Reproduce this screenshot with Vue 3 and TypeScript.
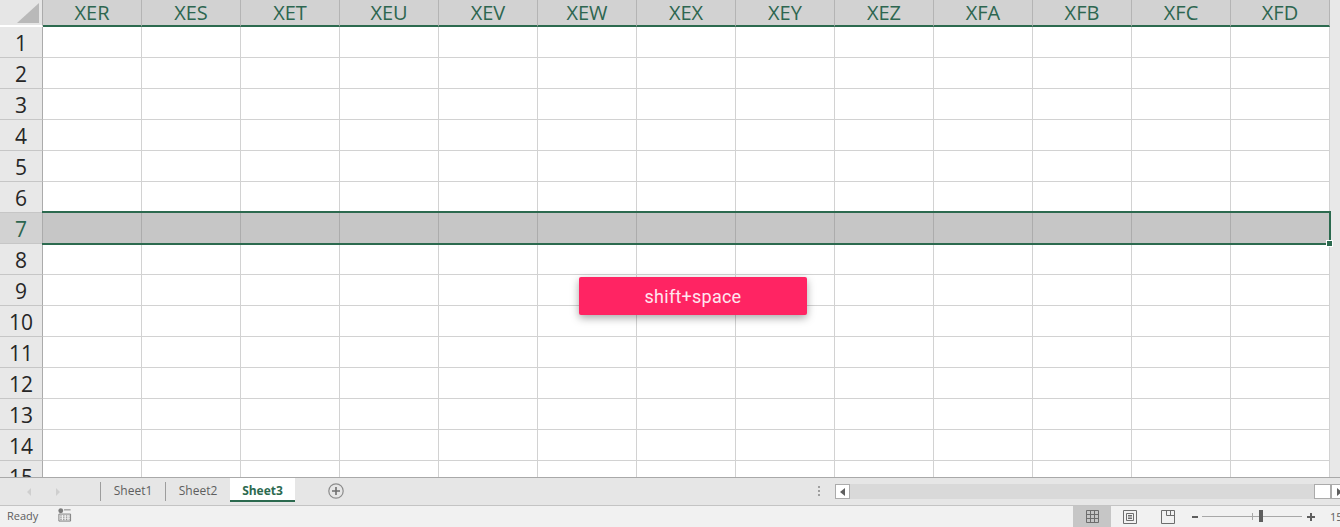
<script setup lang="ts">
const columns: string[] = ['XER','XES','XET','XEU','XEV','XEW','XEX','XEY','XEZ','XFA','XFB','XFC','XFD']
const rows: number[] = Array.from({ length: 15 }, (_, i) => i + 1)
const tabs: string[] = ['Sheet1', 'Sheet2']
</script>

<template>
  <div class="app">
    <div class="sheet">
      <div class="grid">
        <div class="corner"><svg width="42" height="25" viewBox="0 0 42 25"><path d="M39 3V23H17Z" fill="#b9b9b9"/></svg></div>
        <div v-for="c in columns" :key="c" class="col-head">{{ c }}</div>
        <div class="edge-head"></div>
        <template v-for="r in rows" :key="r">
          <div class="row-head" :class="{ active: r === 7 }"><span>{{ r }}</span></div>
          <div v-for="c in columns" :key="c" class="cell" :class="{ selected: r === 7 }"></div>
          <div class="edge"></div>
        </template>
      </div>
      <div class="selection"><i class="handle"></i></div>
      <div class="toast">shift+space</div>
    </div>

    <div class="tabbar">
      <div class="nav">
        <svg width="8" height="10" viewBox="0 0 8 10"><path d="M6 1 2 5l4 4Z" fill="#cfcfcf"/></svg>
        <svg width="8" height="10" viewBox="0 0 8 10"><path d="M2 1l4 4-4 4Z" fill="#cfcfcf"/></svg>
      </div>
      <div v-for="t in tabs" :key="t" class="tab">{{ t }}</div>
      <div class="tab current">Sheet3</div>
      <svg class="add" width="18" height="18" viewBox="0 0 18 18"><circle cx="9" cy="9" r="7.2" fill="none" stroke="#8c8c8c" stroke-width="1.2"/><path d="M9 5v8M5 9h8" stroke="#6f6f6f" stroke-width="1.6"/></svg>
      <div class="grip"><i></i><i></i><i></i></div>
      <div class="scroll">
        <div class="sbtn"><svg width="6" height="8" viewBox="0 0 6 8"><path d="M5 0v8L0 4Z" fill="#5f5f5f"/></svg></div>
        <div class="track"></div>
        <div class="thumb"></div>
        <div class="sbtn end"><svg width="6" height="8" viewBox="0 0 6 8"><path d="M1 0v8l5-4Z" fill="#5f5f5f"/></svg></div>
      </div>
    </div>

    <div class="status">
      <span class="ready">Ready</span>
      <svg class="macro" width="15" height="14" viewBox="0 0 15 15">
        <circle cx="3.5" cy="3" r="2.6" fill="#7a7a7a"/>
        <path d="M7 2h7M1.500 6.500h12.500v7.500h-12.500z" fill="none" stroke="#7a7a7a"/>
        <path d="M3 8.500h1.500M6 8.500h1.500M9 8.500h1.500M12 8.500h1M3 10.500h1.500M6 10.500h1.500M9 10.500h1.500M12 10.500h1M3 12.500h1.500M6 12.500h1.500M9 12.500h1.500M12 12.500h1" stroke="#7a7a7a"/>
      </svg>
      <div class="views">
        <div class="view on"><svg width="13" height="13" viewBox="0 0 13 13"><path d="M.5.500h12v12H.500zM4.500.500v12M8.500.500v12M.500 4.500h12M.500 8.500h12" fill="none" stroke="#6d6d6d"/></svg></div>
        <div class="view"><svg width="14" height="14" viewBox="0 0 14 14"><path d="M.5.500h13v13H.500z" fill="none" stroke="#6d6d6d"/><path d="M3.500 3.500h7v7h-7zM5 5.500h4M5 7h4M5 8.500h4" fill="none" stroke="#6d6d6d"/></svg></div>
        <div class="view"><svg width="14" height="14" viewBox="0 0 14 14"><path d="M.5.500h13v13H.500zM5.500.500v5h8M9.500.500v5" fill="none" stroke="#6d6d6d"/></svg></div>
      </div>
      <div class="zoom">
        <i class="minus"></i>
        <div class="slider"><i class="tick"></i><i class="knob"></i></div>
        <svg class="plus" width="8" height="8" viewBox="0 0 8 8"><path d="M4 0v8M0 4h8" stroke="#5e5e5e" stroke-width="2"/></svg>
      </div>
      <span class="pct">15%</span>
    </div>
  </div>
</template>

<style>
html, body { margin: 0; background: #fff; overflow: hidden; }
</style>

<style scoped>
.app { width: 1340px; height: 527px; overflow: hidden; display: flex; flex-direction: column; font-family: "Open Sans", "Noto Sans", sans-serif; }
.sheet { position: relative; height: 477px; flex: none; overflow: hidden; }
.grid { display: grid; grid-template-columns: 43px repeat(13, 99px) 1fr; grid-auto-rows: 31px; grid-template-rows: 27px; }
.corner { background: #e6e6e6; border-right: 1px solid #ababab; border-bottom: 2px solid #fff; box-sizing: border-box; }
.corner svg { display: block; }
.col-head { box-sizing: border-box; background: #d2d2d2; border-right: 1px solid #b4b4b4; border-bottom: 2px solid #2c6a4f; color: #2d6650; font-size: 20px; line-height: 26px; text-align: center; }
.edge-head { background: #e8e8e8; box-sizing: border-box; }
.row-head { box-sizing: border-box; background: #e8e8e8; border-right: 1px solid #ababab; border-bottom: 1px solid #c6c6c6; color: #262626; font-size: 21px; text-align: center; line-height: 32px; overflow: hidden; }
.row-head.active { background: #d2d2d2; color: #2d6650; }
.cell { box-sizing: border-box; background: #fff; border-right: 1px solid #d2d2d2; border-bottom: 1px solid #d2d2d2; }
.cell.selected { background: #c6c6c6; border-right-color: #acacac; border-bottom-color: #c6c6c6; }
.edge { background: #e8e8e8; }
.selection { position: absolute; box-sizing: border-box; left: 42px; top: 211px; width: 1289px; height: 34px; border: 2px solid #2c6a4f; border-left: 0; }
.handle { position: absolute; right: -4px; bottom: -4px; width: 5px; height: 5px; background: #2c6a4f; border: 1px solid #fff; }
.toast { position: absolute; left: 579px; top: 277px; width: 228px; height: 38px; border-radius: 2px; background: #ff2463; color: #ffe6ef; font-family: "Roboto", sans-serif; font-size: 18px; letter-spacing: .25px; line-height: 40px; text-align: center; box-shadow: 0 3px 8px rgba(0,0,0,.35); }

.tabbar { box-sizing: border-box; height: 29px; flex: none; display: flex; align-items: stretch; background: #e6e6e6; border-top: 1px solid #a9a9a9; border-bottom: 1px solid #c4c4c4; color: #5e5e5e; font-size: 12px; position: relative; }
.nav { width: 100px; flex: none; display: flex; align-items: center; gap: 21px; padding-left: 25px; box-sizing: border-box; }
.tab { box-sizing: border-box; width: 65px; margin: 4px 0 4px; border-left: 1px solid #9d9d9d; text-align: center; line-height: 18px; }
.tab.current { width: 65px; margin: 0 0 3px; padding-top: 4px; background: #fff; border-left: 0; border-bottom: 2px solid #2c6a4f; color: #2c6a4f; font-weight: 700; }
.add { margin: 4px 0 0 32px; }
.grip { width: 2px; margin: 8px 0 0 473px; display: flex; flex-direction: column; gap: 2px; }
.grip i { display: block; width: 2px; height: 2px; background: #9f9f9f; }
.scroll { display: flex; height: 15px; margin: 6px 0 0 15px; flex: 1; min-width: 0; background: #d9d9d9; }
.sbtn { box-sizing: border-box; width: 15px; flex: none; background: #fff; border: 1px solid #ababab; display: flex; align-items: center; justify-content: center; }
.track { flex: 1; }
.thumb { box-sizing: border-box; width: 17px; flex: none; background: #fff; border: 1px solid #ababab; }
.sbtn.end { margin-right: -6px; }

.status { flex: 1; min-height: 0; background: #f1f1f1; display: flex; align-items: center; position: relative; color: #5e5e5e; font-size: 11px; }
.ready { margin: 0 0 2px 7px; width: 51px; flex: none; }
.macro { flex: none; margin: 0 0 3px -1px; }
.views { display: flex; align-self: stretch; margin-left: 1001px; flex: none; }
.view { width: 38px; display: flex; align-items: center; justify-content: center; }
.view.on { background: #c6c6c6; }
.zoom { display: flex; align-items: center; flex: none; margin-left: 5px; }
.minus { display: block; width: 6px; height: 2px; background: #5e5e5e; }
.slider { position: relative; width: 100px; height: 1px; background: #a8a8a8; margin: 0 5px 0 4px; }
.tick { position: absolute; left: 50px; top: -3px; width: 1px; height: 7px; background: #a8a8a8; }
.knob { position: absolute; left: 57px; top: -6px; width: 4px; height: 12px; background: #5e5e5e; }
.plus { flex: none; }
.pct { margin-left: 15px; white-space: nowrap; }
</style>
